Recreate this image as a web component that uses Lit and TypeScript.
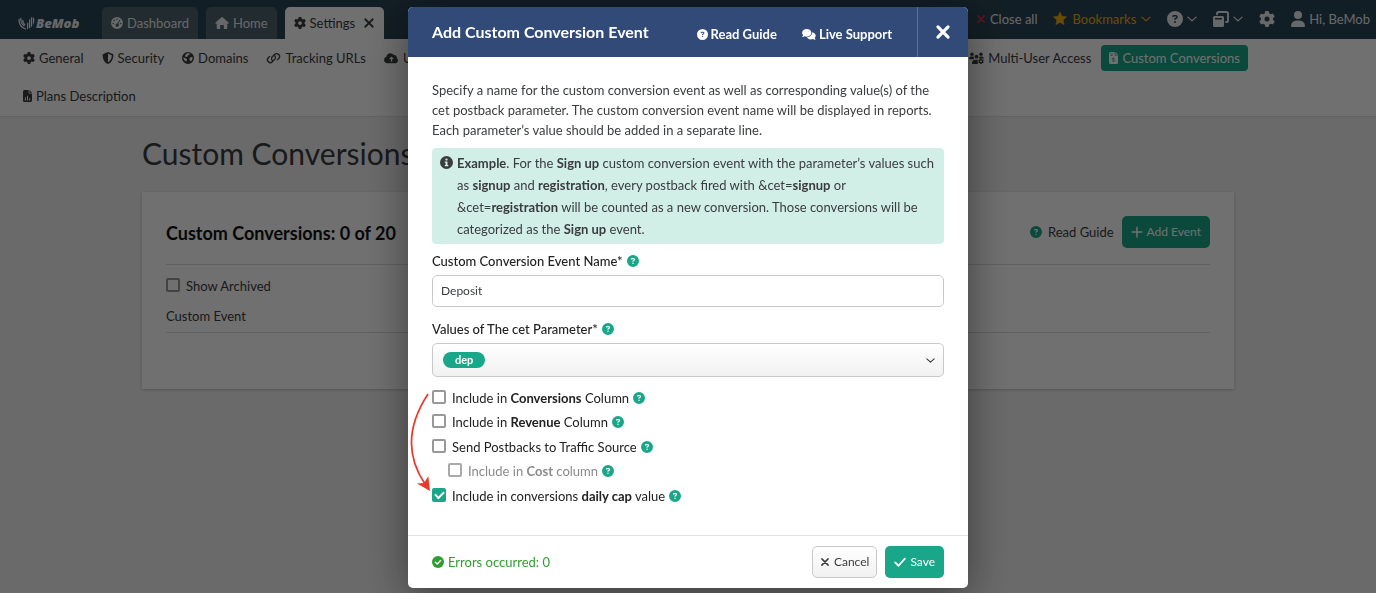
import { LitElement, html, css, svg, nothing } from "lit";
import { customElement, property, state } from "lit/decorators.js";
import { classMap } from "lit/directives/class-map.js";

const GEAR =
  "M495.9 166.6c3.2 8.7 .5 18.4-6.4 24.6l-43.3 39.4c1.1 8.3 1.7 16.8 1.7 25.4s-.6 17.1-1.7 25.4l43.3 39.4c6.9 6.2 9.6 15.9 6.4 24.6c-4.4 11.9-9.7 23.3-15.8 34.3l-4.7 8.1c-6.6 11-14 21.4-22.1 31.2c-5.9 7.2-15.7 9.6-24.5 6.8l-55.7-17.7c-13.4 10.3-28.2 18.9-44 25.4l-12.5 57.1c-2 9.1-9 16.3-18.2 17.8c-13.8 2.3-28 3.5-42.5 3.5s-28.7-1.2-42.5-3.5c-9.2-1.5-16.2-8.7-18.2-17.8l-12.5-57.1c-15.8-6.5-30.6-15.1-44-25.4L83.1 425.9c-8.8 2.8-18.6 .3-24.5-6.8c-8.1-9.8-15.5-20.2-22.1-31.2l-4.7-8.1c-6.1-11-11.4-22.4-15.8-34.3c-3.2-8.7-.5-18.4 6.4-24.6l43.3-39.4C64.6 273.1 64 264.6 64 256s.6-17.1 1.7-25.4L22.4 191.2c-6.9-6.2-9.6-15.9-6.4-24.6c4.4-11.9 9.7-23.3 15.8-34.3l4.7-8.1c6.6-11 14-21.4 22.1-31.2c5.9-7.2 15.7-9.6 24.5-6.8l55.7 17.7c13.4-10.3 28.2-18.9 44-25.4l12.5-57.1c2-9.1 9-16.3 18.2-17.8C227.3 1.2 241.5 0 256 0s28.7 1.2 42.5 3.5c9.2 1.5 16.2 8.7 18.2 17.8l12.5 57.1c15.8 6.5 30.6 15.1 44 25.4l55.7-17.7c8.8-2.8 18.6-.3 24.5 6.8c8.1 9.8 15.5 20.2 22.1 31.2l4.7 8.1c6.1 11 11.4 22.4 15.8 34.3zM256 336a80 80 0 1 0 0-160 80 80 0 1 0 0 160z";
const QUESTION =
  "M256 512A256 256 0 1 0 256 0a256 256 0 1 0 0 512zM169.8 165.3c7.9-22.3 29.1-37.3 52.8-37.3h58.3c34.9 0 63.1 28.3 63.1 63.1c0 22.6-12.1 43.5-31.7 54.8L280 264.4c-.2 13-10.9 23.6-24 23.6c-13.3 0-24-10.7-24-24V250.5c0-8.6 4.6-16.5 12.1-20.8l44.3-25.4c4.7-2.7 7.6-7.7 7.6-13.1c0-8.4-6.8-15.1-15.1-15.1H222.6c-3.4 0-6.4 2.1-7.5 5.3l-.4 1.2c-4.4 12.5-18.2 19-30.6 14.6s-19-18.2-14.6-30.6l.4-1.2zM224 352a32 32 0 1 1 64 0 32 32 0 1 1 -64 0z";

interface Glyph {
  box: string;
  ratio: number;
  body: unknown;
}

const square = (body: unknown, size = 16): Glyph => ({ box: `0 0 ${size} ${size}`, ratio: 1, body });
const stroke = (d: string, width: number) =>
  svg`<path d=${d} fill="none" stroke="currentColor" stroke-width=${width} stroke-linecap="round" stroke-linejoin="round"/>`;

const GLYPHS: Record<string, Glyph> = {
  gear: square(svg`<path d=${GEAR}/>`, 512),
  question: square(svg`<path d=${QUESTION}/>`, 512),
  info: square(
    svg`<path fill-rule="evenodd" d="M8 0a8 8 0 1 0 0 16A8 8 0 0 0 8 0ZM8 3a1.4 1.4 0 1 1 0 2.8A1.4 1.4 0 0 1 8 3ZM5.9 6.8h3.3V11h1v1.6H5.9V11h1V8.400h-1Z"/>`,
  ),
  gauge: square(
    svg`<path fill-rule="evenodd" d="M8 0a8 8 0 1 0 0 16A8 8 0 0 0 8 0ZM8 2a1 1 0 1 1 0 2 1 1 0 0 1 0-2ZM4.200 3.600a1 1 0 1 1 0 2 1 1 0 0 1 0-2ZM2.900 7.500a1 1 0 1 1 0 2 1 1 0 0 1 0-2ZM13.100 7.500a1 1 0 1 1 0 2 1 1 0 0 1 0-2ZM11.500 3.500l1 .6-2.700 5.200a2.200 2.200 0 1 1-1.200-.6Z"/>`,
  ),
  home: {
    box: "0 0 18 16",
    ratio: 1.125,
    body: svg`<path d="M8.300.3a1 1 0 0 1 1.400 0l8 7c.6.6.2 1.600-.7 1.600h-1V15a1 1 0 0 1-1 1h-3.500v-4.500a1 1 0 0 0-1-1h-3a1 1 0 0 0-1 1V16H3a1 1 0 0 1-1-1V8.900H1c-.9 0-1.300-1-.7-1.600Z"/>`,
  },
  close: square(stroke("M3 3l10 10M13 3L3 13", 2.4)),
  heavyclose: square(stroke("M3.500 3.500l9 9M12.500 3.500L3.500 12.500", 2.8)),
  shield: square(
    svg`<path fill-rule="evenodd" d="M8 0l6.400 2.700c.5.2.8.6.8 1.200 0 4.300-1.800 9.600-6.500 11.900a1.500 1.500 0 0 1-1.400 0C2.600 13.500.8 8.200.8 3.900c0-.6.3-1 .8-1.200ZM8 2.200v11.600c3.600-1.900 5-6 5.100-9.400Z"/>`,
  ),
  globe: square(
    svg`<path fill-rule="evenodd" d="M8 0a8 8 0 1 0 0 16A8 8 0 0 0 8 0ZM2 6.500l2.800 2.300 1.600.5.2 1.600-1 1.800A6.300 6.300 0 0 1 2 6.500ZM7 1.800h3.500l-.7 1.900-2 .6-.6 1.900L5 6.600 3.800 5.200 5 3.200ZM11 7l3-.4c.3 2.500-.7 4.700-2.300 6l-.8-1.500L9.500 9.900Z"/>`,
  ),
  link: {
    box: "0 0 20 16",
    ratio: 1.25,
    body: svg`${stroke("M8.500 11.500a3.800 3.800 0 0 1 .2-5.400l2.800-2.800a3.800 3.800 0 0 1 5.400 5.400l-1.800 1.800", 1.7)}${stroke("M11.500 4.800a3.800 3.800 0 0 1-.2 5.400L8.500 13a3.800 3.800 0 0 1-5.400-5.400l1.800-1.800", 1.7)}`,
  },
  cloud: {
    box: "0 0 20 16",
    ratio: 1.25,
    body: svg`<path fill-rule="evenodd" d="M4.500 15A4.500 4.500 0 0 1 3 6.300 5.500 5.500 0 0 1 13 4a3.500 3.500 0 0 1 4 4 4 4 0 0 1-1 7ZM10 6L6.800 9.300h2.300v3.200h1.800V9.300h2.300Z"/>`,
  },
  chartfile: {
    box: "0 0 12 16",
    ratio: 0.75,
    body: svg`<path fill-rule="evenodd" d="M2 0h5.500v4.500H12V14a2 2 0 0 1-2 2H2a2 2 0 0 1-2-2V2a2 2 0 0 1 2-2ZM8.500 0L12 3.500H8.500ZM2.500 9.500V14h1.300V9.500ZM5.400 7.500V14h1.300V7.500ZM8.300 11v3h1.300v-3Z"/>`,
  },
  moneyfile: {
    box: "0 0 12 16",
    ratio: 0.75,
    body: svg`<path fill-rule="evenodd" d="M2 0h5.500v4.500H12V14a2 2 0 0 1-2 2H2a2 2 0 0 1-2-2V2a2 2 0 0 1 2-2ZM8.500 0L12 3.500H8.500ZM2 2v1h3V2ZM2 4v1h3V4Z"/><path d="M7.500 8.300H5.300a1 1 0 0 0 0 2h1.400a1 1 0 0 1 0 2H4.400M6 7.300v1M6 12.300v1" fill="none" stroke="#19a689" stroke-width="1"/>`,
  },
  users: {
    box: "0 0 20 16",
    ratio: 1.25,
    body: svg`<circle cx="4" cy="3" r="2.300"/><circle cx="16" cy="3" r="2.300"/><circle cx="10" cy="6.200" r="2.600"/><path d="M0 9a3 3 0 0 1 3-3h2a3 3 0 0 1 1.500.4A4 4 0 0 0 7 9.500H.5A.5.5 0 0 1 0 9ZM13.500 6.500A3 3 0 0 1 15 6h2a3 3 0 0 1 3 2.500h-6.500ZM4 15.300a5 5 0 0 1 5-5h2.500l.3 5.700H4.700a.7.7 0 0 1-.7-.7Z"/><g transform="translate(12.200 8.500) scale(.0148)"><path d=${GEAR}/></g>`,
  },
  star: {
    box: "0 0 18 17",
    ratio: 1.06,
    body: svg`<path d="M9 0l2.600 5.500 6.100.8-4.500 4.200L14.400 16.600 9 13.600l-5.400 3 1.200-6.100L.3 6.300l6.100-.8Z" stroke="currentColor" stroke-width=".6" stroke-linejoin="round"/>`,
  },
  chevron: square(stroke("M1.500 5l6.500 6 6.500-6", 2)),
  windows: square(
    svg`<path fill-rule="evenodd" d="M2 5h7.500a1.500 1.500 0 0 1 1.500 1.500v8A1.500 1.500 0 0 1 9.500 16H1.600A1.500 1.500 0 0 1 0 14.500v-8A1.500 1.500 0 0 1 1.500 5ZM2 7v1.600h7V7Z"/>${stroke("M4 3.200V2.600A1.600 1.600 0 0 1 5.600 1h7.800A1.600 1.600 0 0 1 15 2.600v6.800a1.600 1.600 0 0 1-1.600 1.600H13", 1.9)}`,
  ),
  user: {
    box: "0 0 14 16",
    ratio: 0.875,
    body: svg`<circle cx="7" cy="4" r="4"/><path d="M0 15a5.500 5.500 0 0 1 5.500-5.500h3A5.500 5.500 0 0 1 14 15a1 1 0 0 1-1 1H1a1 1 0 0 1-1-1Z"/>`,
  },
  chat: {
    box: "0 0 20 16",
    ratio: 1.25,
    body: svg`<path d="M6.800 0C3 0 0 2.500 0 5.500c0 1.200.5 2.300 1.300 3.200C1.200 9.700.7 10.500.1 11c-.2.300 0 .6.2.6 1.400 0 2.600-.5 3.400-1 .9.300 2 .5 3.100.5 3.700 0 6.700-2.500 6.700-5.600S10.500 0 6.800 0Z"/><path d="M14.700 4.700c.1 4-3.600 7.200-8 7.400.9 1.800 3.200 3 6 3 1.100 0 2.200-.2 3.100-.6.900.6 2.100 1.100 3.500 1.100.3 0 .5-.4.200-.6-.5-.5-1-1.300-1.100-2.300.9-.900 1.400-2 1.400-3.200 0-2.300-2.200-4.300-5.100-4.800Z"/>`,
  },
  plus: square(stroke("M8 1.500v13M1.500 8h13", 2)),
  check: square(stroke("M1.500 8.500l4.500 4.500L14.500 3.500", 2.4)),
  checkcircle: square(
    svg`<circle cx="8" cy="8" r="8"/><path d="M4.500 8.300l2.500 2.500 4.500-4.800" fill="none" stroke="#fff" stroke-width="1.900" stroke-linecap="round" stroke-linejoin="round"/>`,
  ),
  wings: {
    box: "0 0 17 14",
    ratio: 1.2,
    body: svg`${stroke("M1 3.500C1 8 3 11.500 7.500 13M2.800 2.500c0 3 .9 5.500 3.200 7.200M4.800 4.500c.1 1.800.7 3 1.900 4", 1.3)}<path d="M9 13.300V7.500L10.200 6v6.800ZM11 12.500V4l1.300-1.500v9.300ZM13 11.300V1.800L14.200.5v9.300ZM15 8.800V1l1.200 1.500c.4 2.500 0 4.500-1.200 6.300Z"/>`,
  },
};

@customElement("bm-icon")
export class BmIcon extends LitElement {
  static styles = css`
    :host {
      display: inline-flex;
      flex: none;
    }
    .glyph {
      display: block;
      fill: currentColor;
    }
  `;

  @property() name = "";
  @property({ type: Number }) size = 12;

  render() {
    const glyph = GLYPHS[this.name];
    if (!glyph) return nothing;
    return html`<svg
      class="glyph"
      viewBox=${glyph.box}
      width=${Math.round(this.size * glyph.ratio)}
      height=${this.size}
      aria-hidden="true"
    >
      ${glyph.body}
    </svg>`;
  }
}

interface NavItem {
  icon: string;
  label: string;
  active?: boolean;
}

const NAV_START: NavItem[] = [
  { icon: "gear", label: "General" },
  { icon: "shield", label: "Security" },
  { icon: "globe", label: "Domains" },
  { icon: "link", label: "Tracking URLs" },
  { icon: "cloud", label: "Uploads" },
];
const NAV_END: NavItem[] = [
  { icon: "users", label: "Multi-User Access" },
  { icon: "moneyfile", label: "Custom Conversions", active: true },
];
const NAV_MORE: NavItem[] = [{ icon: "chartfile", label: "Plans Description" }];

@customElement("app-root")
export class AppRoot extends LitElement {
  static styles = css`
    :host {
      display: block;
      min-height: 100vh;
      background: #f1f1f1;
      color: #3a3c3e;
      font: 13px/20px Lato, "Open Sans", sans-serif;
    }
    * {
      box-sizing: border-box;
    }
    a {
      color: inherit;
      text-decoration: none;
    }
    button,
    input,
    select {
      font: inherit;
      color: inherit;
      margin: 0;
    }
    button {
      border: 0;
      padding: 0;
      background: none;
      cursor: pointer;
    }
    strong {
      font-weight: 700;
    }

    .topbar {
      display: flex;
      height: 39px;
      padding: 0 6px 0 18px;
      background: #2a4454;
      color: #e9edf0;
    }
    .logo {
      display: flex;
      align-items: center;
      width: 84px;
      padding-top: 7px;
      gap: 1px;
      font: italic 800 13px/20px "Open Sans", sans-serif;
    }
    .tabs {
      display: flex;
      align-items: flex-end;
      gap: 8px;
    }
    .tab {
      display: flex;
      align-items: center;
      gap: 4px;
      height: 32px;
      padding: 0 9px;
      border-radius: 5px 5px 0 0;
      background: #4e626e;
    }
    .tab.current {
      background: #fff;
      color: #3a3c3e;
    }
    .tab-close {
      display: flex;
      padding-left: 4px;
    }
    .account {
      display: flex;
      align-items: center;
      margin-left: auto;
      padding-bottom: 2px;
      gap: 16px;
    }
    .account-item {
      display: flex;
      align-items: center;
      gap: 4px;
    }
    .danger {
      color: #d9324a;
      display: flex;
    }
    .gold {
      gap: 5px;
      color: #f0ab13;
    }

    .subnav {
      padding: 0 128px 1px 15px;
      background: #fff;
      border-bottom: 1px solid #e2e2e2;
    }
    .subnav-row {
      display: flex;
      align-items: center;
      height: 38px;
      gap: 2px;
    }
    .subnav-link {
      display: flex;
      align-items: center;
      gap: 4px;
      height: 26px;
      padding: 0 8px;
      border-radius: 4px;
      white-space: nowrap;
    }
    .subnav-link.active {
      background: #19a689;
      color: #fff;
    }
    .subnav-end {
      display: flex;
      margin-left: auto;
      gap: 2px;
    }

    .page {
      max-width: 1124px;
      margin: 0 auto;
      padding: 18px 16px;
    }
    .page-title {
      margin: 0 0 21px;
      font-size: 30px;
      font-weight: 400;
      line-height: 36px;
    }
    .card {
      padding: 24px 24px 56px;
      background: #fff;
      box-shadow: 0 1px 3px rgba(0, 0, 0, 0.2);
    }
    .card-head {
      display: flex;
      align-items: center;
      gap: 8px;
      padding-bottom: 16px;
      border-bottom: 1px solid #dcdcdc;
    }
    .card-title {
      flex: 1;
      margin: 0;
      padding-top: 2px;
      color: #111;
      font-size: 18px;
      font-weight: 700;
      line-height: 24px;
    }
    .guide {
      display: flex;
      align-items: center;
      gap: 6px;
    }
    .archived {
      display: flex;
      align-items: center;
      gap: 6px;
      padding: 11px 0 8px;
    }
    .events {
      width: 100%;
      border-collapse: collapse;
    }
    .events th {
      padding: 2px 0 6px;
      border-bottom: 1px solid #dcdcdc;
      text-align: left;
      font-weight: 400;
    }

    .btn {
      display: flex;
      align-items: center;
      justify-content: center;
      gap: 4px;
      height: 32px;
      padding: 0 9px;
      border-radius: 5px;
      font-size: 12px;
    }
    .btn.primary {
      background: #19a689;
      color: #fff;
    }
    .btn.plain {
      padding: 0 7px;
      border: 1px solid #c9c9c9;
      background: linear-gradient(#fff, #f1f1f1);
    }

    .box {
      flex: none;
      appearance: none;
      display: grid;
      place-items: center;
      width: 14px;
      height: 14px;
      margin-bottom: 2px;
      border: 2px solid #989898;
      border-radius: 2px;
      background: #fff;
    }
    .box:checked {
      border-color: #19a689;
      background: #19a689;
    }
    .box:checked::before {
      content: "";
      width: 7px;
      height: 4px;
      border: solid #fff;
      border-width: 0 0 2px 2px;
      transform: translateY(-1px) rotate(-45deg);
    }
    .box:disabled {
      border-color: #a9a9a9;
    }

    .backdrop {
      position: fixed;
      inset: 0;
      display: flex;
      justify-content: center;
      align-items: flex-start;
      padding: 7px 16px;
      overflow: hidden;
      background: rgba(0, 0, 0, 0.56);
    }
    .modal {
      width: 100%;
      max-width: 560px;
      border-radius: 5px;
      background: #fff;
      box-shadow: 0 8px 44px rgba(0, 0, 0, 0.45);
    }
    .modal-head {
      display: flex;
      align-items: center;
      gap: 25px;
      height: 50px;
      padding-left: 24px;
      border-radius: 5px 5px 0 0;
      background: #314a78;
      color: #fff;
    }
    .modal-title {
      flex: 1;
      margin: 0;
      font-size: 16px;
      font-weight: 700;
    }
    .head-link {
      display: flex;
      align-items: center;
      gap: 3px;
      padding-top: 4px;
      font-weight: 700;
    }
    .modal-close {
      display: grid;
      place-items: center;
      width: 51px;
      height: 50px;
      border-left: 1px solid #5a7098;
    }
    .modal-body {
      padding: 23px 24px 27px;
    }
    .intro {
      margin: 0 0 8px;
    }
    .example {
      display: flex;
      gap: 4px;
      margin-bottom: 7px;
      padding: 4px 8px;
      border-radius: 4px;
      background: #d1eee7;
      line-height: 22px;
    }
    .example-text {
      margin: 0;
    }
    .example-icon {
      display: flex;
      padding-top: 4px;
    }
    .field-label {
      display: flex;
      align-items: center;
      gap: 4px;
      padding-bottom: 4px;
      color: #222;
      font-weight: 500;
    }
    .help {
      display: flex;
      color: #19a689;
    }
    .text-input {
      display: block;
      width: 100%;
      height: 32px;
      margin-bottom: 12px;
      padding: 0 8px 2px;
      border: 1px solid #c9c9c9;
      border-radius: 5px;
      background: #fff;
      font-size: 12px;
    }
    .tag-select {
      display: flex;
      align-items: center;
      height: 34px;
      margin-bottom: 9px;
      padding: 0 8px 0 10px;
      border: 1px solid #c9c9c9;
      border-radius: 5px;
      background: linear-gradient(#fff, #f1f1f1);
    }
    .tag {
      padding: 0 12px;
      border-radius: 8px;
      background: #19a689;
      color: #fff;
      font-size: 11px;
      font-weight: 700;
      line-height: 16px;
    }
    .tag-picker {
      flex: 1;
      min-width: 0;
      height: 30px;
      border: 0;
      appearance: none;
      background: none;
    }
    .options {
      display: flex;
      flex-direction: column;
      margin: 0;
      padding: 0;
      border: 0;
    }
    .postbacks {
      padding: 1px 0;
    }
    .option {
      display: flex;
      align-items: center;
      gap: 6px;
      height: 24px;
      color: #222;
    }
    .option-label {
      margin-right: -2px;
    }
    .option.nested {
      padding-left: 16px;
      color: #8a8a8a;
    }
    .modal-foot {
      display: flex;
      align-items: center;
      gap: 8px;
      padding: 10px 24px;
      border-top: 1px solid #e2e2e2;
    }
    .status {
      display: flex;
      flex: 1;
      align-items: center;
      gap: 4px;
      color: #2f9e2f;
    }
    .arrow-anchor {
      position: relative;
    }
    .arrow {
      position: absolute;
      left: -24px;
      top: -5px;
      width: 28px;
      height: 112px;
      pointer-events: none;
    }
  `;

  @state() private eventName = "Deposit";

  private navLink(item: NavItem) {
    return html`<a class=${classMap({ "subnav-link": true, active: !!item.active })} href="#">
      <bm-icon name=${item.icon} size="12"></bm-icon>${item.label}
    </a>`;
  }

  private help() {
    return html`<a class="help" href="#" aria-label="Help"><bm-icon name="question" size="12"></bm-icon></a>`;
  }

  private option(id: string, label: unknown, opts: { checked?: boolean; nested?: boolean } = {}) {
    return html`<div class=${classMap({ option: true, nested: !!opts.nested })}>
      <input class="box" type="checkbox" id=${id} .checked=${!!opts.checked} ?disabled=${!!opts.nested} />
      <label class="option-label" for=${id}>${label}</label>
      ${this.help()}
    </div>`;
  }

  private renderPage() {
    return html`
      <header class="topbar">
        <a class="logo" href="#"><bm-icon name="wings" size="14"></bm-icon>BeMob</a>
        <nav class="tabs">
          <a class="tab" href="#"><bm-icon name="gauge" size="12"></bm-icon>Dashboard</a>
          <a class="tab" href="#"><bm-icon name="home" size="12"></bm-icon>Home</a>
          <a class="tab current" href="#"
            ><bm-icon name="gear" size="12"></bm-icon>Settings
            <span class="tab-close"><bm-icon name="close" size="12"></bm-icon></span
          ></a>
        </nav>
        <div class="account">
          <button class="account-item">
            <span class="danger"><bm-icon name="close" size="10"></bm-icon></span>Close all
          </button>
          <button class="account-item gold">
            <bm-icon name="star" size="13"></bm-icon>Bookmarks<bm-icon name="chevron" size="10"></bm-icon>
          </button>
          <button class="account-item" aria-label="Help">
            <bm-icon name="question" size="16"></bm-icon><bm-icon name="chevron" size="10"></bm-icon>
          </button>
          <button class="account-item" aria-label="Windows">
            <bm-icon name="windows" size="16"></bm-icon><bm-icon name="chevron" size="10"></bm-icon>
          </button>
          <button class="account-item" aria-label="Settings"><bm-icon name="gear" size="16"></bm-icon></button>
          <button class="account-item"><bm-icon name="user" size="16"></bm-icon>Hi, BeMob</button>
        </div>
      </header>
      <nav class="subnav">
        <div class="subnav-row">
          ${NAV_START.map((i) => this.navLink(i))}
          <div class="subnav-end">${NAV_END.map((i) => this.navLink(i))}</div>
        </div>
        <div class="subnav-row">${NAV_MORE.map((i) => this.navLink(i))}</div>
      </nav>
      <main class="page">
        <h1 class="page-title">Custom Conversions</h1>
        <section class="card">
          <div class="card-head">
            <h2 class="card-title">Custom Conversions: 0 of 20</h2>
            <a class="guide" href="#"
              ><span class="help"><bm-icon name="question" size="12"></bm-icon></span>Read Guide</a
            >
            <button class="btn primary"><bm-icon name="plus" size="12"></bm-icon>Add Event</button>
          </div>
          <div class="archived">
            <input class="box" type="checkbox" id="archived" /><label for="archived">Show Archived</label>
          </div>
          <table class="events">
            <thead>
              <tr>
                <th scope="col">Custom Event</th>
              </tr>
            </thead>
          </table>
        </section>
      </main>
    `;
  }

  render() {
    return html`
      ${this.renderPage()}
      <div class="backdrop">
        <section class="modal" role="dialog" aria-modal="true" aria-labelledby="modal-title">
          <header class="modal-head">
            <h2 class="modal-title" id="modal-title">Add Custom Conversion Event</h2>
            <a class="head-link" href="#"><bm-icon name="question" size="11"></bm-icon>Read Guide</a>
            <a class="head-link" href="#"><bm-icon name="chat" size="11"></bm-icon>Live Support</a>
            <button class="modal-close" aria-label="Close"><bm-icon name="heavyclose" size="18"></bm-icon></button>
          </header>
          <div class="modal-body">
            <p class="intro">
              Specify a name for the custom conversion event as well as corresponding value(s) of the cet postback
              parameter. The custom conversion event name will be displayed in reports. Each parameter’s value should
              be added in a separate line.
            </p>
            <div class="example">
              <span class="example-icon"><bm-icon name="info" size="13"></bm-icon></span>
              <p class="example-text">
                <strong>Example</strong>. For the <strong>Sign up</strong> custom conversion event with the
                parameter’s values such as <strong>signup</strong> and <strong>registration</strong>, every postback
                fired with &amp;cet=<strong>signup</strong> or &amp;cet=<strong>registration</strong> will be counted
                as a new conversion. Those conversions will be categorized as the <strong>Sign up</strong> event.
              </p>
            </div>
            <div class="field-label">
              <label for="event-name">Custom Conversion Event Name*</label>${this.help()}
            </div>
            <input
              class="text-input"
              id="event-name"
              type="text"
              .value=${this.eventName}
              @input=${(e: Event) => (this.eventName = (e.target as HTMLInputElement).value)}
            />
            <div class="field-label">
              <label for="cet-values">Values of The cet Parameter*</label>${this.help()}
            </div>
            <div class="tag-select">
              <span class="tag">dep</span>
              <select class="tag-picker" id="cet-values">
                <option value=""></option>
              </select>
              <bm-icon name="chevron" size="9"></bm-icon>
            </div>
            <div class="arrow-anchor">
              <fieldset class="options">
                ${this.option("conversions", html`Include in <strong>Conversions</strong> Column`)}
                ${this.option("revenue", html`Include in <strong>Revenue</strong> Column`)}
                <div class="postbacks">
                  ${this.option("postbacks", "Send Postbacks to Traffic Source")}
                  ${this.option("cost", html`Include in <strong>Cost</strong> column`, { nested: true })}
                </div>
                ${this.option("cap", html`Include in conversions <strong>daily cap</strong> value`, { checked: true })}
              </fieldset>
              <svg class="arrow" viewBox="0 0 28 112" aria-hidden="true">
                <path d="M20 13C-1 45 -2 75 17 103" fill="none" stroke="#e8392b" stroke-width="1.700" />
                <path d="M22 110L9 102.500L16 102L20.300 95.300Z" fill="#e8392b" />
              </svg>
            </div>
          </div>
          <footer class="modal-foot">
            <span class="status"><bm-icon name="checkcircle" size="12"></bm-icon>Errors occurred: 0</span>
            <button class="btn plain"><bm-icon name="close" size="10"></bm-icon>Cancel</button>
            <button class="btn primary"><bm-icon name="check" size="12"></bm-icon>Save</button>
          </footer>
        </section>
      </div>
    `;
  }
}
